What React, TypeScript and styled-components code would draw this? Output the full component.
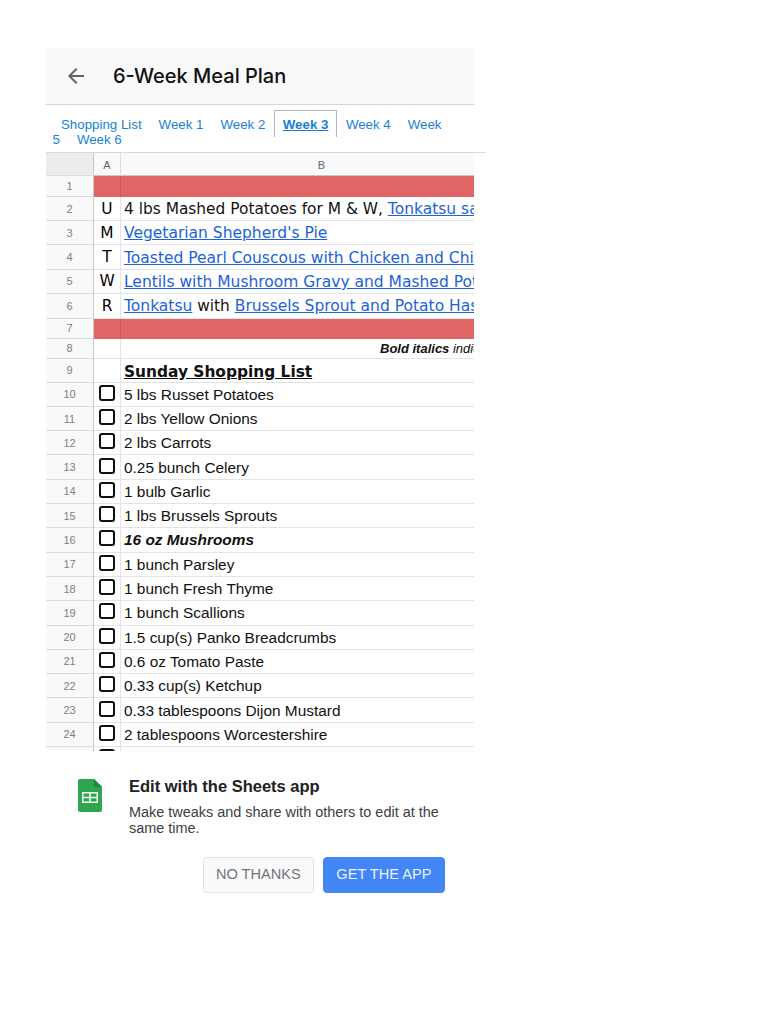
import React from 'react';
import styled, { createGlobalStyle } from 'styled-components';

const GlobalStyle = createGlobalStyle`
  html, body {
    margin: 0;
    background: #fff;
  }
  body {
    font-family: "Liberation Sans", Arial, sans-serif;
  }
`;

const Page = styled.div`
  width: 768px;
  height: 1024px;
  padding: 48px 0 0 46px;
  box-sizing: border-box;
  overflow: hidden;
`;

const Header = styled.header`
  width: 428px;
  height: 57px;
  display: flex;
  align-items: center;
  gap: 25px;
  padding-left: 18px;
  box-sizing: border-box;
  background: #f9f9f9;
  border-bottom: 1px solid #d6d6d6;
`;

const BackButton = styled.button`
  width: 24px;
  height: 24px;
  padding: 0;
  border: 0;
  background: none;
  color: #5f6368;
  display: flex;
  align-items: center;
  justify-content: center;
`;

const Title = styled.h1`
  margin: 0;
  font-size: 20px;
  font-weight: 500;
  font-family: Inter, "Liberation Sans", sans-serif;
  color: #111;
`;

const Tabs = styled.nav`
  width: 440px;
  height: 48px;
  padding: 12px 36px 0 6.5px;
  box-sizing: border-box;
  border-bottom: 1px solid #d9d9d9;
  font-size: 13.3px;
  line-height: 15px;
`;

const Tab = styled.a<{ $active?: boolean }>`
  padding: ${({ $active }) => ($active ? '6px 8px 5px' : '0 8.5px')};
  color: #1a7fd4;
  font-weight: ${({ $active }) => ($active ? 700 : 400)};
  text-decoration: ${({ $active }) => ($active ? 'underline' : 'none')};
  border: ${({ $active }) => ($active ? '1px solid #b5b5b5' : '0')};
  border-bottom: 0;
`;

const Sheet = styled.div`
  width: 428px;
  height: 598px;
  overflow: hidden;
`;

const Row = styled.div<{ $height: number }>`
  display: grid;
  grid-template-columns: 48px 27px 402px;
  height: ${({ $height }) => $height}px;
  box-sizing: border-box;
`;

const RowNumber = styled.div`
  display: flex;
  align-items: center;
  justify-content: center;
  background: #f8f9fa;
  border-right: 1px solid #c4c7c5;
  border-bottom: 1px solid #dadce0;
  font-size: 11px;
  color: #808080;
`;

const Corner = styled(RowNumber)`
  background: #ececec;
`;

const ColumnHead = styled.div`
  display: flex;
  align-items: center;
  justify-content: center;
  padding-top: 1px;
  background: #f8f9fa;
  border-right: 1px solid #dadce0;
  border-bottom: 1px solid #c4c7c5;
  font-size: 11px;
  color: #666;
`;

const Cell = styled.div<{ $fill?: boolean }>`
  min-width: 0;
  display: flex;
  align-items: center;
  justify-content: center;
  box-sizing: border-box;
  background: ${({ $fill }) => ($fill ? '#e06666' : '#fff')};
  border-right: 1px solid ${({ $fill }) => ($fill ? '#c95c5c' : '#e4e4e4')};
  border-bottom: 1px solid ${({ $fill }) => ($fill ? '#e06666' : '#e2e3e5')};
  font-family: "DejaVu Sans", Verdana, sans-serif;
  font-size: 15.4px;
  color: #000;
`;

const WideCell = styled.div<{ $fill?: boolean; $display?: boolean }>`
  min-width: 0;
  overflow: hidden;
  white-space: nowrap;
  padding: 1px 0 0 3px;
  background: ${({ $fill }) => ($fill ? '#e06666' : '#fff')};
  border-bottom: 1px solid ${({ $fill }) => ($fill ? '#e06666' : '#e2e3e5')};
  display: flex;
  align-items: center;
  font-family: ${({ $display }) => ($display ? '"DejaVu Sans", Verdana, sans-serif' : '"Liberation Sans", Arial, sans-serif')};
  font-size: 15.4px;
  color: #111;
`;

const Recipe = styled.a`
  color: #1c62d8;
  font-size: 15.5px;
  text-decoration: underline;
`;

const Heading = styled.span`
  padding-top: 2px;
  font-weight: 700;
  text-decoration: underline;
`;

const Emphasis = styled.span`
  font-weight: 700;
  font-style: italic;
`;

const Note = styled.span`
  margin-left: 256px;
  font-size: 13px;
  font-style: italic;
`;

const Box = styled.span`
  width: 12px;
  height: 12px;
  border: 2px solid #111;
  border-radius: 3px;
  margin-top: -3px;
`;

const Promo = styled.section`
  width: 428px;
  display: grid;
  grid-template-columns: 83px 1fr;
  padding-top: 26px;
`;

const AppIcon = styled.svg`
  margin: 2px 0 0 32px;
`;

const PromoTitle = styled.h2`
  margin: 0 0 9px;
  font-size: 16.5px;
  line-height: 18px;
  color: #202124;
`;

const PromoText = styled.p`
  margin: 0;
  width: 325px;
  font-size: 14.45px;
  line-height: 16px;
  color: #3c4043;
`;

const Actions = styled.div`
  grid-column: 1 / -1;
  display: flex;
  justify-content: flex-end;
  gap: 9px;
  padding: 21px 29px 0 0;
`;

const ActionButton = styled.button<{ $primary?: boolean }>`
  height: 36px;
  padding: ${({ $primary }) => ($primary ? '0 12.5px 3px' : '0 12px 3px')};
  border-radius: 4px;
  border: 1px solid ${({ $primary }) => ($primary ? '#4285f4' : '#e3e3e3')};
  background: ${({ $primary }) => ($primary ? '#4285f4' : '#fafafa')};
  color: ${({ $primary }) => ($primary ? '#eaf1fe' : '#70757a')};
  font-family: "Liberation Sans", Arial, sans-serif;
  font-size: 14.6px;
`;

const dayRows = [
  { n: 3, day: 'M', content: <Recipe>Vegetarian Shepherd's Pie</Recipe> },
  { n: 4, day: 'T', content: <Recipe>Toasted Pearl Couscous with Chicken and Chickpeas</Recipe> },
  { n: 5, day: 'W', content: <Recipe>Lentils with Mushroom Gravy and Mashed Potatoes</Recipe> },
  { n: 6, day: 'R', content: <span><Recipe>Tonkatsu</Recipe> with <Recipe>Brussels Sprout and Potato Hash</Recipe></span> },
];

const shopping = [
  '5 lbs Russet Potatoes',
  '2 lbs Yellow Onions',
  '2 lbs Carrots',
  '0.25 bunch Celery',
  '1 bulb Garlic',
  '1 lbs Brussels Sprouts',
  '16 oz Mushrooms',
  '1 bunch Parsley',
  '1 bunch Fresh Thyme',
  '1 bunch Scallions',
  '1.5 cup(s) Panko Breadcrumbs',
  '0.6 oz Tomato Paste',
  '0.33 cup(s) Ketchup',
  '0.33 tablespoons Dijon Mustard',
  '2 tablespoons Worcestershire',
  '1 tablespoon Soy Sauce',
];

export default function App() {
  return (
    <Page>
      <GlobalStyle />
      <Header>
        <BackButton aria-label="Back">
          <svg width="24" height="24" viewBox="0 0 24 24" fill="currentColor">
            <path d="M20 11H7.830l5.590-5.590L12 4l-8 8 8 8 1.410-1.410L7.830 13H20v-2z" />
          </svg>
        </BackButton>
        <Title>6-Week Meal Plan</Title>
      </Header>
      <Tabs>
        <Tab>Shopping List</Tab><Tab>Week 1</Tab><Tab>Week 2</Tab><Tab $active>Week 3</Tab><Tab>Week 4</Tab><Tab>Week 5</Tab><Tab>Week 6</Tab>
      </Tabs>
      <Sheet>
        <Row $height={23}>
          <Corner />
          <ColumnHead>A</ColumnHead>
          <ColumnHead>B</ColumnHead>
        </Row>
        <Row $height={21}>
          <RowNumber>1</RowNumber>
          <Cell $fill />
          <WideCell $fill />
        </Row>
        <Row $height={24}>
          <RowNumber>2</RowNumber>
          <Cell>U</Cell>
          <WideCell $display><span>4 lbs Mashed Potatoes for M &amp; W, <Recipe>Tonkatsu sauce</Recipe></span></WideCell>
        </Row>
        {dayRows.map((row) => (
          <Row $height={24.4} key={row.n}>
            <RowNumber>{row.n}</RowNumber>
            <Cell>{row.day}</Cell>
            <WideCell $display>{row.content}</WideCell>
          </Row>
        ))}
        <Row $height={20}>
          <RowNumber>7</RowNumber>
          <Cell $fill />
          <WideCell $fill />
        </Row>
        <Row $height={20}>
          <RowNumber>8</RowNumber>
          <Cell />
          <WideCell><Note><Emphasis>Bold italics</Emphasis> indicate</Note></WideCell>
        </Row>
        <Row $height={24}>
          <RowNumber>9</RowNumber>
          <Cell />
          <WideCell $display><Heading>Sunday Shopping List</Heading></WideCell>
        </Row>
        {shopping.map((item, i) => (
          <Row $height={24.3} key={item}>
            <RowNumber>{i + 10}</RowNumber>
            <Cell><Box /></Cell>
            <WideCell>{item === '16 oz Mushrooms' ? <Emphasis>{item}</Emphasis> : item}</WideCell>
          </Row>
        ))}
      </Sheet>
      <Promo>
        <AppIcon width="24" height="33" viewBox="0 0 24 33">
          <path d="M2 0h14l8 8v23a2 2 0 0 1-2 2H2a2 2 0 0 1-2-2V2a2 2 0 0 1 2-2z" fill="#2ea650" />
          <path d="M16 0l8 8h-8z" fill="#1c8a3c" />
          <path d="M4 13h16v11H4zM5.500 14.500v3.200h5.700v-3.200zM12.800 14.500v3.200h5.700v-3.200zM5.500 19.300v3.200h5.700v-3.200zM12.800 19.300v3.200h5.700v-3.200z" fill="#f1f8f4" fillRule="evenodd" />
        </AppIcon>
        <div>
          <PromoTitle>Edit with the Sheets app</PromoTitle>
          <PromoText>Make tweaks and share with others to edit at the same time.</PromoText>
        </div>
        <Actions>
          <ActionButton>NO THANKS</ActionButton>
          <ActionButton $primary>GET THE APP</ActionButton>
        </Actions>
      </Promo>
    </Page>
  );
}
